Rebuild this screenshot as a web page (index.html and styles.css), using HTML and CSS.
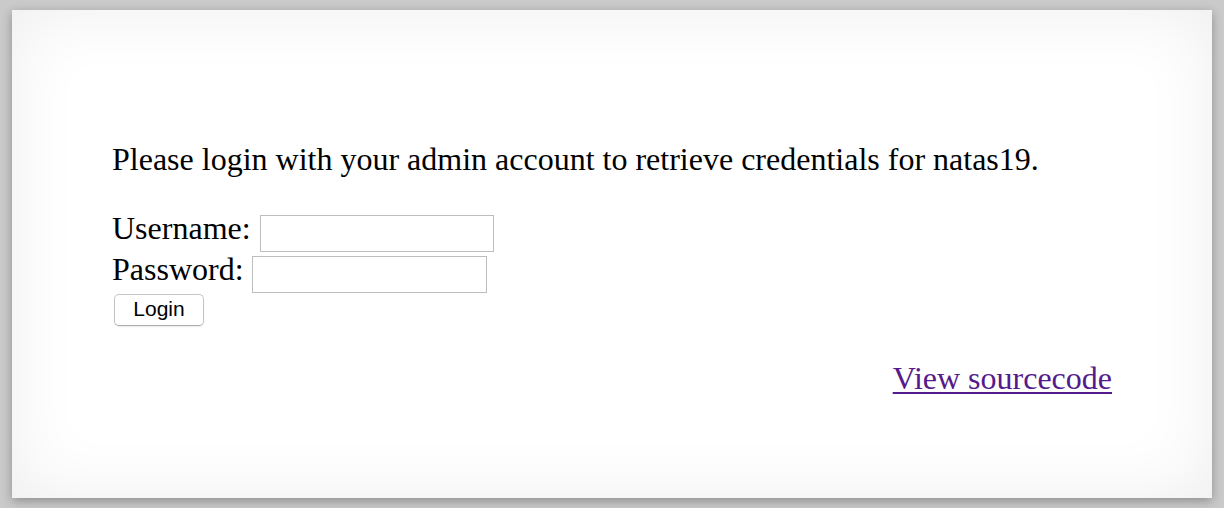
FILE: index.html
```html
<!DOCTYPE html>
<html>
<head>
<meta charset="utf-8">
<link rel="stylesheet" href="styles.css">
<title>natas18</title>
</head>
<body>
<div class="content">
  <p class="intro">Please login with your admin account to retrieve credentials for natas19.</p>
  <form class="login">
    <div class="row">
      <span class="label">Username:</span>
      <input class="field field-user" name="username">
    </div>
    <div class="row">
      <span class="label label-pass">Password:</span>
      <input class="field" name="password">
    </div>
    <button type="button" class="btn">Login</button>
  </form>
  <div class="source"><a href="#" class="link">View sourcecode</a></div>
</div>
</body>
</html>
```
FILE: styles.css
```css
html, body {
  margin: 0;
  padding: 0;
}
body {
  background: #cacaca;
  width: 1224px;
  height: 508px;
  box-sizing: border-box;
  padding: 10px 12px 10px 12px;
  font-family: "Liberation Serif", "Times New Roman", serif;
  font-size: 32px;
  color: #000;
}
.content {
  width: 1200px;
  height: 488px;
  box-sizing: border-box;
  background: #fff;
  padding: 131px 100px 0 100px;
  box-shadow: 0 3px 10px rgba(0, 0, 0, 0.3), inset 0 0 70px rgba(0, 0, 0, 0.07);
}
.intro {
  margin: 0;
  line-height: 36px;
  white-space: nowrap;
}
.login {
  margin: 33px 0 0 0;
}
.row {
  display: flex;
  align-items: baseline;
  height: 41px;
  line-height: 36px;
}
.label {
  margin-right: 9px;
}
.label-pass {
  margin-right: 8px;
}
.field {
  box-sizing: border-box;
  width: 235px;
  height: 37px;
  border: 1px solid #bdbdbd;
  border-radius: 0;
  padding: 2px 6px 0 6px;
  font-family: "Liberation Sans", Arial, sans-serif;
  font-size: 13px;
  background: #fff;
  outline: none;
}
.field-user {
  width: 234px;
}
.btn {
  display: block;
  box-sizing: border-box;
  margin: 2px 0 0 2px;
  width: 90px;
  height: 32px;
  padding: 0 0 3px 0;
  background: #fff;
  border: 1px solid #c4c4c4;
  border-bottom-color: #adadad;
  border-radius: 5px;
  font-family: "Liberation Sans", Arial, sans-serif;
  font-size: 21px;
  color: #000;
  box-shadow: 0 1px 1px rgba(0, 0, 0, 0.08);
}
.source {
  margin-top: 34px;
  text-align: right;
  line-height: 36px;
}
.link {
  color: #551a8b;
  text-decoration: underline;
  text-decoration-thickness: 2px;
  text-underline-offset: 3px;
}
```
